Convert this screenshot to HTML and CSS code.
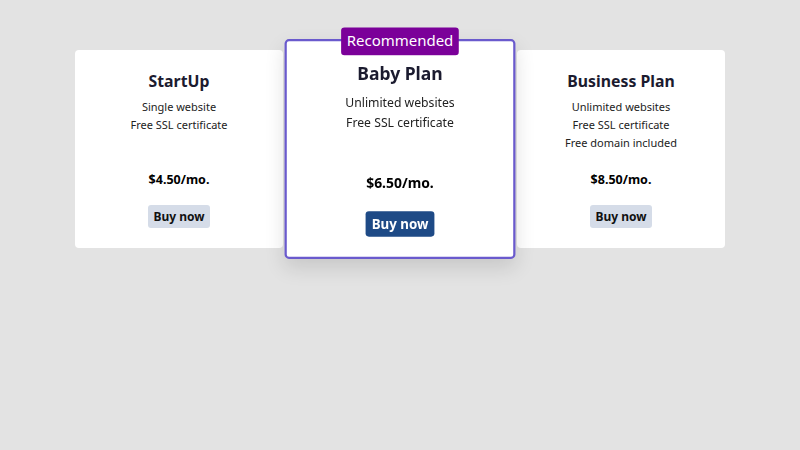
FILE: index.html
```html
<!DOCTYPE html>
<html lang="en">
<head>
  <meta charset="UTF-8">
  <title>Pricing</title>
  <meta name="viewport" content="width=device-width, initial-scale=1.0">
  <link rel="stylesheet" href="styles.css">
</head>
<body>

  <div class="pricing">
    <div class="card">
      <h3 class="plan-name">StartUp</h3>
      <ul class="features">
        <li>Single website</li>
        <li>Free SSL certificate</li>
      </ul>
      <div class="price">$4.50/mo.</div>
      <button class="buy-btn">Buy now</button>
    </div>

    <div class="card featured">
      <span class="badge">Recommended</span>
      <h3 class="plan-name">Baby Plan</h3>
      <ul class="features">
        <li>Unlimited websites</li>
        <li>Free SSL certificate</li>
      </ul>
      <div class="price">$6.50/mo.</div>
      <button class="buy-btn">Buy now</button>
    </div>

    <div class="card">
      <h3 class="plan-name">Business Plan</h3>
      <ul class="features">
        <li>Unlimited websites</li>
        <li>Free SSL certificate</li>
        <li>Free domain included</li>
      </ul>
      <div class="price">$8.50/mo.</div>
      <button class="buy-btn">Buy now</button>
    </div>
  </div>

</body>
</html>
```

FILE: styles.css
```css
* {
  box-sizing: border-box;
  margin: 0;
  padding: 0;
}

body {
  font-family: "Noto Sans", "Open Sans", sans-serif;
  background-color: #e3e3e3;
  min-height: 100vh;
}

.pricing {
  display: flex;
  justify-content: center;
  gap: 13px;
  padding-top: 50px;
}

.card {
  position: relative;
  width: 208px;
  background: #fff;
  border: 2px solid transparent;
  border-radius: 4px;
  padding: 18px 16px 18px;
  display: flex;
  flex-direction: column;
  align-items: center;
  text-align: center;
}

.featured {
  border-color: #6a5acd;
  transform: scale(1.11);
  box-shadow: 0 8px 18px rgba(0, 0, 0, 0.12);
  z-index: 1;
}

.badge {
  position: absolute;
  top: 0;
  left: 50%;
  transform: translate(-50%, -50%);
  background: #7b0099;
  color: #fff;
  font-size: 13.5px;
  line-height: 25px;
  padding: 0 5px;
  border-radius: 3px;
  white-space: nowrap;
}

.plan-name {
  font-size: 15.8px;
  font-weight: 700;
  line-height: 22px;
  color: #1b1b2f;
}

.features {
  list-style: none;
  flex: 1;
  margin: 6px 0 18px;
  font-size: 11px;
  line-height: 18px;
  color: #222;
}

.price {
  font-size: 12.5px;
  font-weight: 700;
  line-height: 20px;
  color: #000;
}

.buy-btn {
  margin-top: 15px;
  font-family: inherit;
  font-size: 12px;
  font-weight: 700;
  line-height: 23px;
  padding: 0 5px;
  border: none;
  border-radius: 3px;
  background-color: #d5dce8;
  color: #111;
  cursor: pointer;
}

.featured .buy-btn {
  background-color: #1e4a86;
  color: #fff;
}
```
